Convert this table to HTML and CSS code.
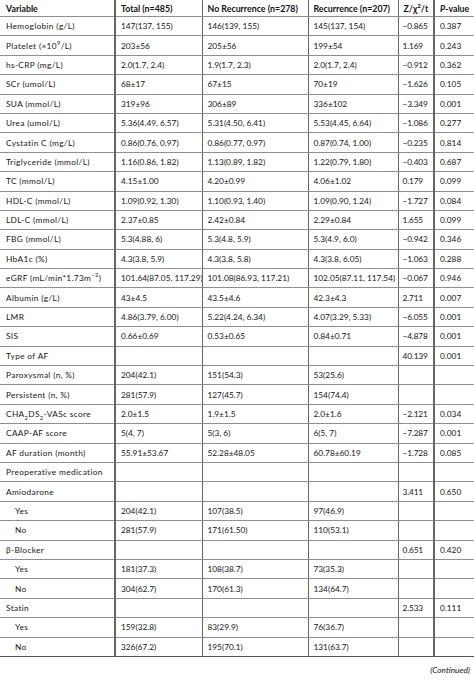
FILE: index.html
```html
<!DOCTYPE html>
<html>
<head>
<meta charset="utf-8">
<link rel="stylesheet" href="styles.css">
</head>
<body>
<table class="data">
<colgroup>
<col class="c1"><col class="c2"><col class="c3"><col class="c4"><col class="c5"><col class="c6">
</colgroup>
<thead>
<tr><th>Variable</th><th>Total (n=485)</th><th>No Recurrence (n=278)</th><th>Recurrence (n=207)</th><th>Z/χ<sup>2</sup>/t</th><th><i>P</i>-value</th></tr>
</thead>
<tbody>
<tr><td>Hemoglobin (g/L)</td><td>147(137, 155)</td><td>146(139, 155)</td><td>145(137, 154)</td><td>−0.865</td><td>0.387</td></tr>
<tr><td>Platelet (×10<sup>9</sup>/L)</td><td>203±56</td><td>205±56</td><td>199±54</td><td>1.169</td><td>0.243</td></tr>
<tr><td>hs-CRP (mg/L)</td><td>2.0(1.7, 2.4)</td><td>1.9(1.7, 2.3)</td><td>2.0(1.7, 2.4)</td><td>−0.912</td><td>0.362</td></tr>
<tr><td>SCr (umol/L)</td><td>68±17</td><td>67±15</td><td>70±19</td><td>−1.626</td><td>0.105</td></tr>
<tr><td>SUA (mmol/L)</td><td>319±96</td><td>306±89</td><td>336±102</td><td>−3.349</td><td>0.001</td></tr>
<tr><td>Urea (umol/L)</td><td>5.36(4.49, 6.57)</td><td>5.31(4.50, 6.41)</td><td>5.53(4.45, 6.64)</td><td>−1.086</td><td>0.277</td></tr>
<tr><td>Cystatin C (mg/L)</td><td>0.86(0.76, 0.97)</td><td>0.86(0.77, 0.97)</td><td>0.87(0.74, 1.00)</td><td>−0.235</td><td>0.814</td></tr>
<tr><td>Triglyceride (mmol/L)</td><td>1.16(0.86, 1.82)</td><td>1.13(0.89, 1.82)</td><td>1.22(0.79, 1.80)</td><td>−0.403</td><td>0.687</td></tr>
<tr><td>TC (mmol/L)</td><td>4.15±1.00</td><td>4.20±0.99</td><td>4.06±1.02</td><td>0.179</td><td>0.099</td></tr>
<tr><td>HDL-C (mmol/L)</td><td>1.09(0.92, 1.30)</td><td>1.10(0.93, 1.40)</td><td>1.09(0.90, 1.24)</td><td>−1.727</td><td>0.084</td></tr>
<tr><td>LDL-C (mmol/L)</td><td>2.37±0.85</td><td>2.42±0.84</td><td>2.29±0.84</td><td>1.655</td><td>0.099</td></tr>
<tr><td>FBG (mmol/L)</td><td>5.3(4.88, 6)</td><td>5.3(4.8, 5.9)</td><td>5.3(4.9, 6.0)</td><td>−0.942</td><td>0.346</td></tr>
<tr><td>HbA1c (%)</td><td>4.3(3.8, 5.9)</td><td>4.3(3.8, 5.8)</td><td>4.3(3.8, 6.05)</td><td>−1.063</td><td>0.288</td></tr>
<tr><td>eGRF (mL/min*1.73m<sup>−2</sup>)</td><td>101.64(87.05, 117.29)</td><td>101.08(86.93, 117.21)</td><td>102.05(87.11, 117.54)</td><td>−0.067</td><td>0.946</td></tr>
<tr><td>Albumin (g/L)</td><td>43±4.5</td><td>43.5±4.6</td><td>42.3±4.3</td><td>2.711</td><td>0.007</td></tr>
<tr><td>LMR</td><td>4.86(3.79, 6.00)</td><td>5.22(4.24, 6.34)</td><td>4.07(3.29, 5.33)</td><td>−6.055</td><td>0.001</td></tr>
<tr><td>SIS</td><td>0.66±0.69</td><td>0.53±0.65</td><td>0.84±0.71</td><td>−4.878</td><td>0.001</td></tr>
<tr><td>Type of AF</td><td></td><td></td><td></td><td>40.139</td><td>0.001</td></tr>
<tr><td>Paroxysmal (n, %)</td><td>204(42.1)</td><td>151(54.3)</td><td>53(25.6)</td><td></td><td></td></tr>
<tr><td>Persistent (n, %)</td><td>281(57.9)</td><td>127(45.7)</td><td>154(74.4)</td><td></td><td></td></tr>
<tr><td>CHA<sub>2</sub>DS<sub>2</sub>-VASc score</td><td>2.0±1.5</td><td>1.9±1.5</td><td>2.0±1.6</td><td>−2.121</td><td>0.034</td></tr>
<tr><td>CAAP-AF score</td><td>5(4, 7)</td><td>5(3, 6)</td><td>6(5, 7)</td><td>−7.287</td><td>0.001</td></tr>
<tr><td>AF duration (month)</td><td>55.91±53.67</td><td>52.28±48.05</td><td>60.78±60.19</td><td>−1.728</td><td>0.085</td></tr>
<tr><td>Preoperative medication</td><td></td><td></td><td></td><td></td><td></td></tr>
<tr><td>Amiodarone</td><td></td><td></td><td></td><td>3.411</td><td>0.650</td></tr>
<tr><td class="ind">Yes</td><td>204(42.1)</td><td>107(38.5)</td><td>97(46.9)</td><td></td><td></td></tr>
<tr><td class="ind">No</td><td>281(57.9)</td><td>171(61.50)</td><td>110(53.1)</td><td></td><td></td></tr>
<tr><td>β-Blocker</td><td></td><td></td><td></td><td>0.651</td><td>0.420</td></tr>
<tr><td class="ind">Yes</td><td>181(37.3)</td><td>108(38.7)</td><td>73(35.3)</td><td></td><td></td></tr>
<tr><td class="ind">No</td><td>304(62.7)</td><td>170(61.3)</td><td>134(64.7)</td><td></td><td></td></tr>
<tr><td>Statin</td><td></td><td></td><td></td><td>2.533</td><td>0.111</td></tr>
<tr><td class="ind">Yes</td><td>159(32.8)</td><td>83(29.9)</td><td>76(36.7)</td><td></td><td></td></tr>
<tr><td class="ind">No</td><td>326(67.2)</td><td>195(70.1)</td><td>131(63.7)</td><td></td><td></td></tr>
</tbody>
</table>
<div class="cont">(Continued)</div>
</body>
</html>
```
FILE: styles.css
```css
html, body {
  margin: 0;
  padding: 0;
  background: #fff;
}
body {
  font-family: Lato, "Open Sans", sans-serif;
  font-size: 8.3px;
  color: #161616;
  width: 474px;
}
.data {
  width: 474px;
  border-collapse: collapse;
  table-layout: fixed;
}
.c1 { width: 115px; }
.c2 { width: 87px; }
.c3 { width: 106px; }
.c4 { width: 90px; }
.c5 { width: 36px; }
.c6 { width: 40px; }
.data th, .data td {
  text-align: left;
  padding: 0 0 0 5px;
  white-space: nowrap;
  overflow: hidden;
  border-bottom: 1px solid #8f8f8f;
  border-left: 1px solid #666;
}
.data th:first-child, .data td:first-child {
  border-left: none;
  padding-left: 6px;
  letter-spacing: 0.35px;
}
.data th:nth-child(2), .data td:nth-child(2),
.data th:nth-child(6), .data td:nth-child(6) {
  border-left: 2px solid #666;
}
.data td:nth-child(5) {
  letter-spacing: -0.15px;
  padding-left: 4px;
}
.data th {
  font-weight: bold;
  font-size: 8.8px;
  height: 16px;
  color: #111;
}
.data th:first-child {
  letter-spacing: 0;
}
.data td {
  height: 18.4px;
}
.data tbody tr:last-child td {
  border-bottom: 1.5px solid #555;
}
.data td.ind {
  padding-left: 15px;
}
sup, sub {
  font-size: 70%;
  line-height: 0;
}
.cont {
  text-align: right;
  font-style: italic;
  padding: 8px 4px 0 0;
  font-size: 8.3px;
}
```
